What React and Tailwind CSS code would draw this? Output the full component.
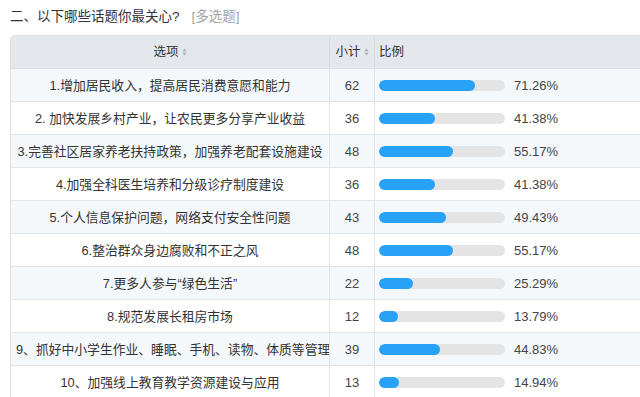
const rows = [
  { label: "1.增加居民收入，提高居民消费意愿和能力", count: 62, pct: 71.26 },
  { label: "2. 加快发展乡村产业，让农民更多分享产业收益", count: 36, pct: 41.38 },
  { label: "3.完善社区居家养老扶持政策，加强养老配套设施建设", count: 48, pct: 55.17 },
  { label: "4.加强全科医生培养和分级诊疗制度建设", count: 36, pct: 41.38 },
  { label: "5.个人信息保护问题，网络支付安全性问题", count: 43, pct: 49.43 },
  { label: "6.整治群众身边腐败和不正之风", count: 48, pct: 55.17 },
  { label: "7.更多人参与“绿色生活”", count: 22, pct: 25.29 },
  { label: "8.规范发展长租房市场", count: 12, pct: 13.79 },
  { label: "9、抓好中小学生作业、睡眠、手机、读物、体质等管理", count: 39, pct: 44.83 },
  { label: "10、加强线上教育教学资源建设与应用", count: 13, pct: 14.94 },
];

function SortIcon() {
  return (
    <svg viewBox="0 0 6 10" className="ml-[3px] h-[8px] w-[5px] text-[#a8adb3]" fill="currentColor">
      <path d="M3 0.5 5.6 4H0.4z" />
      <path d="M3 9.5 5.6 6H0.4z" />
    </svg>
  );
}

export default function App() {
  return (
    <div
      className="h-[397px] w-[640px] overflow-hidden bg-white text-[13px] text-[#333]"
      style={{ fontFamily: '"Liberation Sans", "Noto Sans CJK SC", sans-serif' }}
    >
      <div className="flex h-[35px] items-center pl-[10px] pb-[1px] text-[13.5px]">
        <span className="text-[#333]">二、以下哪些话题你最关心?</span>
        <span className="ml-[12px] text-[#a3a3a3]">[多选题]</span>
      </div>

      <div className="w-[680px] ml-[10px] overflow-hidden rounded-tl-[5px] border-l border-t border-[#dcdfe3]">
        <div className="flex h-[33px] bg-[#e4e7eb] border-b border-[#dcdfe3] text-[12.5px]">
          <div className="flex w-[319px] items-center justify-center border-r border-[#d6d9dd]">
            选项
            <SortIcon />
          </div>
          <div className="flex w-[45px] items-center justify-center border-r border-[#d6d9dd]">
            小计
            <SortIcon />
          </div>
          <div className="flex flex-1 items-center pl-[4px]">比例</div>
        </div>

        {rows.map((r, i) => (
          <div
            key={i}
            className={
              "flex h-[33px] border-b border-[#e2e5e8] " + (i % 2 === 0 ? "bg-[#f5f8fb]" : "bg-white")
            }
          >
            <div className="w-[319px] overflow-hidden whitespace-nowrap border-r border-[#e2e5e8] px-[5px] pt-[1px] text-center text-[12.8px] leading-[31px]">
              {r.label}
            </div>
            <div className="flex w-[45px] items-center justify-center border-r border-[#e2e5e8] pt-[1px] text-[#444]">
              {r.count}
            </div>
            <div className="flex flex-1 items-center pl-[4px] pt-[1px]">
              <div className="h-[11px] w-[126px] overflow-hidden rounded-full bg-[#e4e4e4]">
                <div
                  className="h-full rounded-full bg-[#27a2f6]"
                  style={{ width: Math.min(126, r.pct * 1.35) + "px" }}
                />
              </div>
              <span className="ml-[9px] text-[#444]">{r.pct.toFixed(2)}%</span>
            </div>
          </div>
        ))}
      </div>
    </div>
  );
}
